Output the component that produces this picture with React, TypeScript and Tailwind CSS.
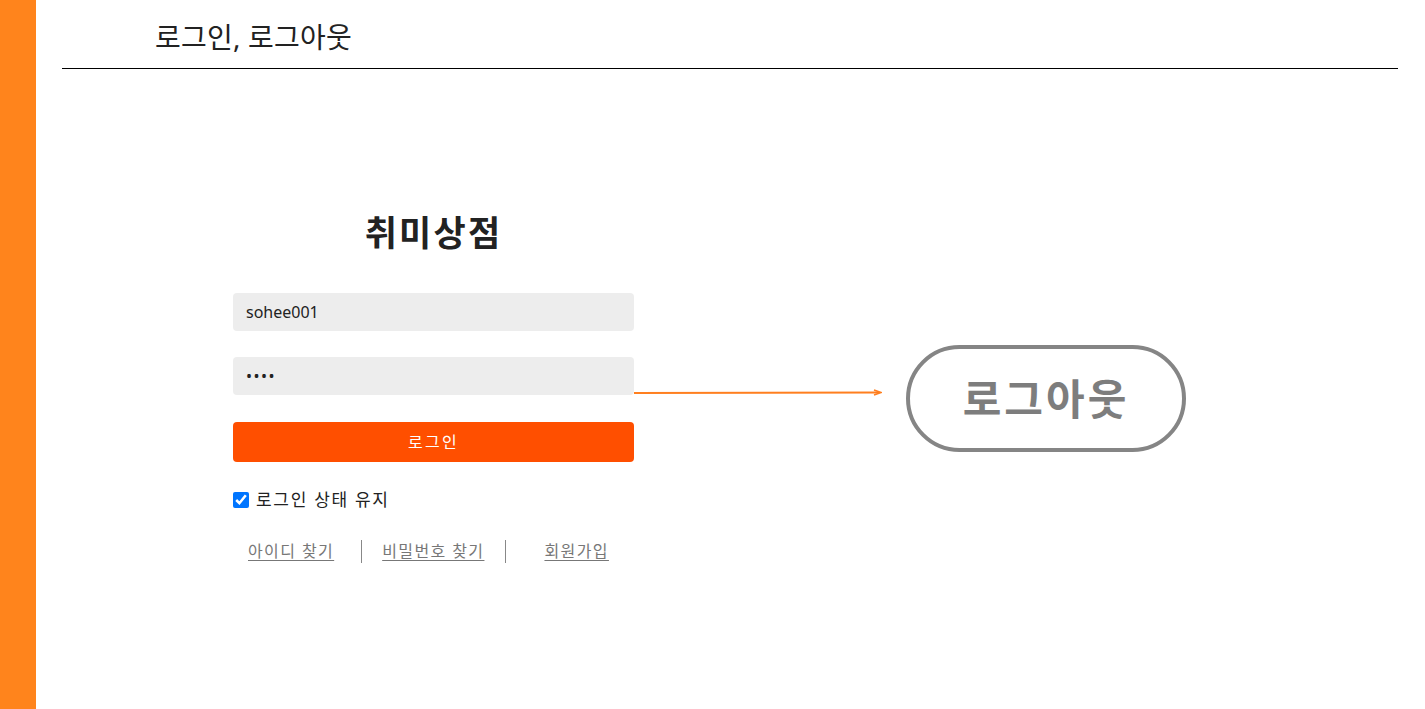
export default function App() {
  const font = { fontFamily: '"Noto Sans", "Noto Sans CJK KR", sans-serif' };
  return (
    <div className="flex min-h-[709px] bg-white text-[#222]" style={font}>
      {/* left accent bar */}
      <div className="w-[36px] shrink-0 bg-[#ff841c]" />

      <div className="flex-1">
        {/* header */}
        <div className="ml-[26px] mr-[27px] h-[69px] border-b border-black pl-[93px] pt-[17px]">
          <h1 className="text-[28px] leading-[40px] font-normal tracking-[0.2px]">로그인, 로그아웃</h1>
        </div>

        <div className="ml-[197px] mt-[140px] flex items-start">
          {/* login form */}
          <div className="w-[401px] flex flex-col">
            <h2 className="text-center text-[35px] leading-[48px] font-bold tracking-[2.2px]">취미상점</h2>
            <input
              readOnly
              value="sohee001"
              className="mt-[36px] h-[38px] rounded-[4px] bg-[#ededed] px-[13px] text-[16px] outline-none"
              style={font}
            />
            <input
              readOnly
              type="password"
              value="1234"
              className="mt-[26px] h-[38px] rounded-[4px] bg-[#ededed] px-[13px] text-[16px] tracking-[1.5px] outline-none"
              style={font}
            />
            <button className="mt-[27px] h-[40px] rounded-[4px] bg-[#ff4f00] text-[16px] tracking-[2.2px] text-white">
              로그인
            </button>
            <label className="mt-[26px] flex h-[24px] items-center gap-[7px] text-[17px] tracking-[1.7px]">
              <input type="checkbox" checked readOnly className="m-0 h-[16px] w-[16px] accent-[#0075ff]" />
              <span>로그인 상태 유지</span>
            </label>
            <div className="mt-[27px] flex h-[24px] items-center pl-[15px] text-[16px] tracking-[1.4px] text-[#777]">
              <a className="underline underline-offset-[3px]">아이디 찾기</a>
              <span className="ml-[27px] h-[23px] w-px bg-[#888]" />
              <a className="ml-[20px] underline underline-offset-[3px]">비밀번호 찾기</a>
              <span className="ml-[21px] h-[23px] w-px bg-[#888]" />
              <a className="ml-[38px] underline underline-offset-[3px]">회원가입</a>
            </div>
          </div>

          {/* arrow */}
          <div className="w-[272px] pt-[180px]">
            <svg width="248" height="8" viewBox="0 0 248 8">
              <line x1="0" y1="4" x2="245" y2="3.5" stroke="#ff7f1f" strokeWidth="2" />
              <path d="M240 1 L247 3.6 L240 6" fill="none" stroke="#ff7f1f" strokeWidth="1.6" />
            </svg>
          </div>

          {/* logout pill */}
          <div className="mt-[136px] flex h-[107px] w-[280px] items-center justify-center rounded-full border-[4px] border-[#858585]">
            <span className="text-[42px] font-bold text-[#7d7d7d] tracking-[3px]">로그아웃</span>
          </div>
        </div>
      </div>
    </div>
  );
}
